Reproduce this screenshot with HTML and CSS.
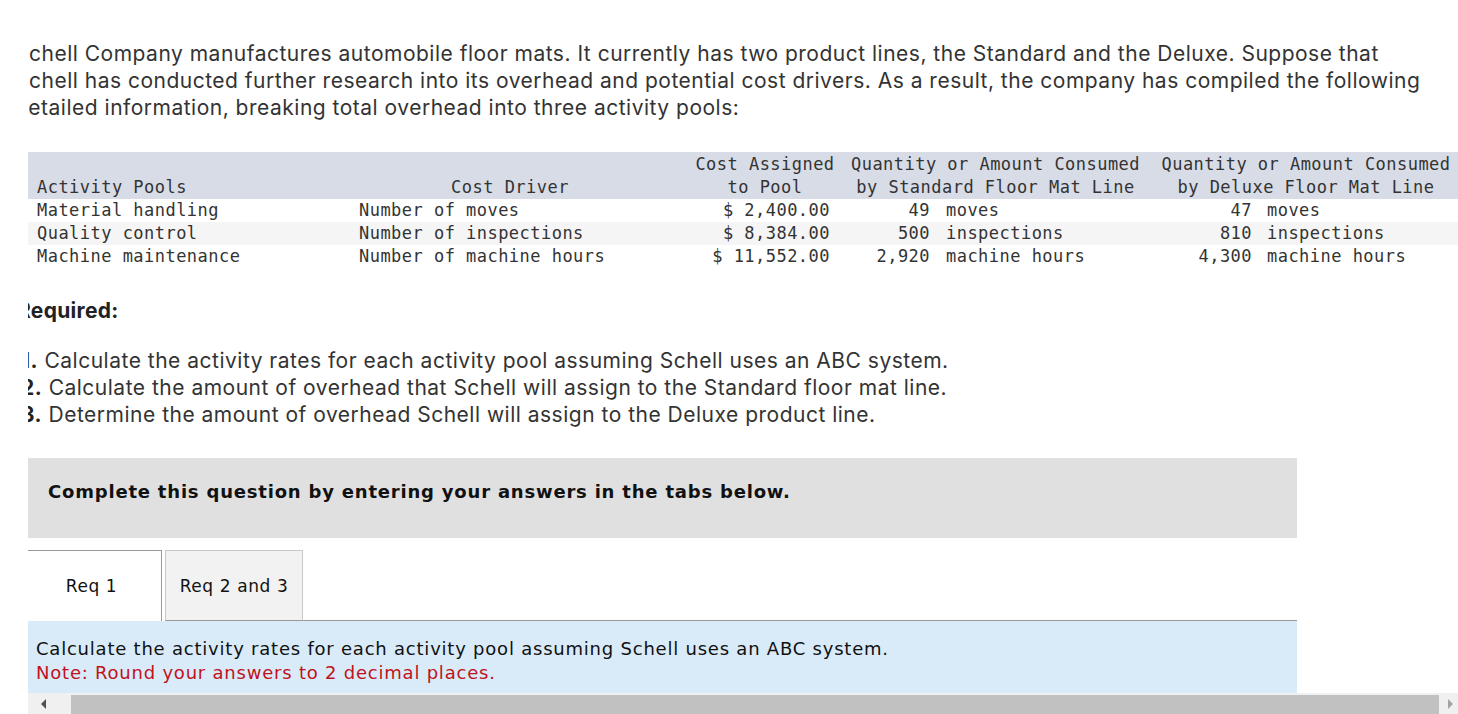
FILE: index.html
```html
<!DOCTYPE html>
<html lang="en">
<head>
<meta charset="utf-8">
<title>Schell Company</title>
<link rel="stylesheet" href="styles.css">
</head>
<body>
<div class="page">
  <p class="intro">Schell Company manufactures automobile floor mats. It currently has two product lines, the Standard and the Deluxe. Suppose that<br>Schell has conducted further research into its overhead and potential cost drivers. As a result, the company has compiled the following<br>detailed information, breaking total overhead into three activity pools:</p>

  <table class="data">
    <colgroup>
      <col class="c1"><col class="c2"><col class="c3"><col class="c4a"><col class="c4b"><col class="c5a"><col class="c5b">
    </colgroup>
    <thead>
      <tr>
        <th class="left">Activity Pools</th>
        <th class="driver">Cost Driver</th>
        <th>Cost Assigned<br>to Pool</th>
        <th colspan="2">Quantity or Amount Consumed<br>by Standard Floor Mat Line</th>
        <th colspan="2">Quantity or Amount Consumed<br>by Deluxe Floor Mat Line</th>
      </tr>
    </thead>
    <tbody>
      <tr>
        <td class="left">Material handling</td>
        <td class="drv">Number of moves</td>
        <td class="cost">$ 2,400.00</td>
        <td class="num">49</td><td class="unit">moves</td>
        <td class="num">47</td><td class="unit u5">moves</td>
      </tr>
      <tr class="alt">
        <td class="left">Quality control</td>
        <td class="drv">Number of inspections</td>
        <td class="cost">$ 8,384.00</td>
        <td class="num">500</td><td class="unit">inspections</td>
        <td class="num">810</td><td class="unit u5">inspections</td>
      </tr>
      <tr>
        <td class="left">Machine maintenance</td>
        <td class="drv">Number of machine hours</td>
        <td class="cost">$ 11,552.00</td>
        <td class="num">2,920</td><td class="unit">machine hours</td>
        <td class="num">4,300</td><td class="unit u5">machine hours</td>
      </tr>
    </tbody>
  </table>

  <h3 class="req-title">Required:</h3>
  <ol class="req-list">
    <li><b>1.</b> Calculate the activity rates for each activity pool assuming Schell uses an ABC system.</li>
    <li><b>2.</b> Calculate the amount of overhead that Schell will assign to the Standard floor mat line.</li>
    <li><b>3.</b> Determine the amount of overhead Schell will assign to the Deluxe product line.</li>
  </ol>

  <div class="instruct">Complete this question by entering your answers in the tabs below.</div>

  <div class="tabs">
    <div class="tab active">Req 1</div>
    <div class="tab other">Req 2 and 3</div>
    <div class="tab-rest"></div>
  </div>

  <div class="panel">
    <div class="panel-q">Calculate the activity rates for each activity pool assuming Schell uses an ABC system.</div>
    <div class="panel-note">Note: Round your answers to 2 decimal places.</div>
  </div>

  <div class="hscroll">
    <div class="arrow-btn"><span class="tri-left"></span></div>
    <div class="thumb"></div>
    <div class="arrow-btn right"><span class="tri-right"></span></div>
  </div>
</div>
</body>
</html>
```

FILE: styles.css
```css
html, body {
  margin: 0;
  padding: 0;
  background: #ffffff;
  overflow: hidden;
}

.page {
  margin-left: 28px;
  width: 1430px;
  overflow: hidden;
  font-family: "Inter", "Lato", sans-serif;
  color: #333333;
}

.intro {
  margin: 40px 0 0 -13px;
  font-size: 21px;
  letter-spacing: 0.5px;
  line-height: 27px;
  white-space: nowrap;
}

.data {
  margin-top: 31px;
  width: 1433px;
  table-layout: fixed;
  border-collapse: collapse;
  font-family: "DejaVu Sans Mono", "Liberation Mono", monospace;
  font-size: 17px;
  letter-spacing: 0.47px;
  line-height: 23px;
  color: #333333;
}

.c1 { width: 322px; }
.c2 { width: 340px; }
.c3 { width: 150px; }
.c4a { width: 95px; }
.c4b { width: 216px; }
.c5a { width: 106px; }
.c5b { width: 204px; }

.data thead tr {
  background: #d8dce6;
}

.data th {
  font-weight: normal;
  text-align: center;
  vertical-align: bottom;
  padding: 1px 0 0 0;
  white-space: nowrap;
}

.data th.left {
  text-align: left;
  padding-left: 9px;
}

.data th.driver {
  padding-right: 20px;
}

.data td {
  padding: 0;
  white-space: nowrap;
}

.data tr.alt {
  background: #f5f5f5;
}

.data td.left { padding-left: 9px; }
.data td.drv { padding-left: 9px; }
.data td.cost { text-align: right; padding-right: 10px; }
.data td.num { text-align: right; padding-right: 5px; }
.data td.unit { padding-left: 11px; }
.data td.unit.u5 { padding-left: 10px; }

.req-title {
  margin: 29px 0 0 -11px;
  font-size: 21px;
  letter-spacing: 0.3px;
  line-height: 27px;
  font-weight: bold;
  color: #222222;
}

.req-list {
  list-style: none;
  margin: 23px 0 0 -7px;
  padding: 0;
  font-size: 21px;
  letter-spacing: 0.5px;
  line-height: 27px;
}

.req-list b {
  color: #222222;
}

.instruct {
  margin-top: 30px;
  width: 1269px;
  height: 80px;
  box-sizing: border-box;
  padding: 22px 0 0 20px;
  background: #e0e0e0;
  font-family: "DejaVu Sans", Verdana, sans-serif;
  font-weight: bold;
  font-size: 18px;
  letter-spacing: 0.8px;
  line-height: 24px;
  color: #111111;
}

.tabs {
  display: flex;
  margin-top: 12px;
  width: 1269px;
  height: 71px;
}

.tab {
  box-sizing: border-box;
  height: 71px;
  display: flex;
  align-items: center;
  justify-content: center;
  font-family: "DejaVu Sans", Verdana, sans-serif;
  font-size: 17px;
  letter-spacing: 0.6px;
  color: #111111;
}

.tab.active {
  width: 134px;
  background: #ffffff;
  border-top: 1px solid #999999;
  border-right: 1px solid #999999;
  padding-right: 6px;
}

.tab.other {
  width: 138px;
  margin-left: 3px;
  background: #f2f2f2;
  border: 1px solid #c8c8c8;
  border-bottom: 1px solid #999999;
}

.tab-rest {
  flex: 1;
  border-bottom: 1px solid #999999;
}

.panel {
  width: 1269px;
  box-sizing: border-box;
  padding: 16px 8px 8px 8px;
  background: #d9ebf8;
  font-family: "DejaVu Sans", Verdana, sans-serif;
  font-size: 18px;
  letter-spacing: 0.78px;
  line-height: 24px;
}

.panel-q {
  color: #111111;
}

.panel-note {
  color: #c0121b;
}

.hscroll {
  display: flex;
  height: 21px;
  background: #f0f0f0;
  align-items: flex-end;
}

.arrow-btn {
  width: 43px;
  height: 21px;
  display: flex;
  align-items: center;
  justify-content: center;
  padding-right: 12px;
  box-sizing: border-box;
}

.arrow-btn.right {
  width: 19px;
  padding-right: 0;
  padding-left: 4px;
}

.tri-left {
  width: 0;
  height: 0;
  border-top: 5px solid transparent;
  border-bottom: 5px solid transparent;
  border-right: 5px solid #505050;
}

.tri-right {
  width: 0;
  height: 0;
  border-top: 5px solid transparent;
  border-bottom: 5px solid transparent;
  border-left: 5px solid #a3a3a3;
}

.thumb {
  width: 1368px;
  height: 19px;
  background: #c1c1c1;
}
```
